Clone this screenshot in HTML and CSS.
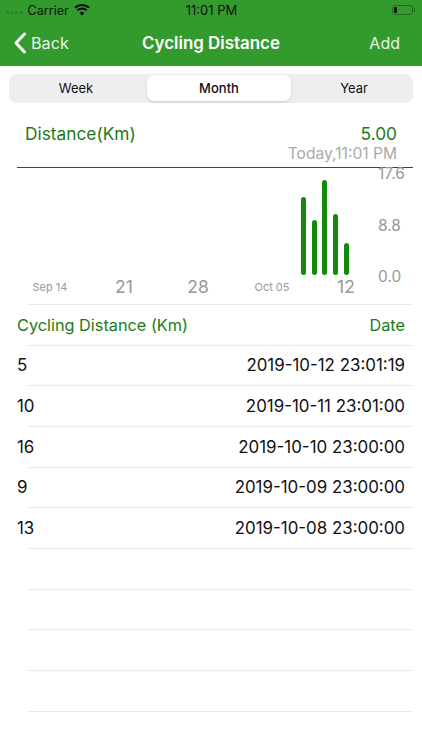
FILE: index.html
```html
<!DOCTYPE html>
<html lang="en">
<head>
<meta charset="utf-8">
<title>Cycling Distance</title>
<link rel="stylesheet" href="styles.css">
</head>
<body>
<div class="app">
  <header class="header">
    <div class="status">
      <div class="status-left">
        <span class="dots"><i></i><i></i><i></i><i></i></span>
        <span>Carrier</span>
        <svg class="wifi" viewBox="0 0 16 12" width="16" height="12"><path d="M8 11.600 5.600 8.900a3.500 3.500 0 0 1 4.800 0z" fill="#111"/><path d="M3.900 7.100a6 6 0 0 1 8.200 0l1.300-1.400a8 8 0 0 0-10.800 0z" fill="#111"/><path d="M1.600 4.600a9.300 9.300 0 0 1 12.800 0L15.800 3.200a11.300 11.300 0 0 0-15.600 0z" fill="#111"/></svg>
      </div>
      <div class="status-time">11:01 PM</div>
      <div class="status-right">
        <span class="battery"><span class="battery-level"></span></span><span class="battery-cap"></span>
      </div>
    </div>
    <nav class="nav">
      <a class="back"><svg viewBox="0 0 14 22" width="14" height="22"><path d="M11.500 2 3 11l8.500 9" fill="none" stroke="#fff" stroke-width="3" stroke-linecap="round" stroke-linejoin="round"/></svg><span>Back</span></a>
      <h1 class="title">Cycling Distance</h1>
      <a class="add">Add</a>
    </nav>
  </header>

  <div class="segments">
    <div class="segment">Week</div>
    <div class="segment active">Month</div>
    <div class="segment">Year</div>
  </div>

  <section class="summary">
    <div class="summary-row">
      <span class="summary-label">Distance(Km)</span>
      <span class="summary-value">5.00</span>
    </div>
    <div class="summary-time">Today,11:01 PM</div>
  </section>

  <section class="chart">
    <div class="plot">
      <div class="bars">
        <span class="bar" style="height:78px"></span>
        <span class="bar" style="height:55px"></span>
        <span class="bar" style="height:95px"></span>
        <span class="bar" style="height:61px"></span>
        <span class="bar" style="height:32px"></span>
      </div>
      <div class="y-axis"><span>17.6</span><span>8.8</span><span>0.0</span></div>
    </div>
    <div class="x-axis">
      <span class="small">Sep 14</span><span>21</span><span>28</span><span class="small">Oct 05</span><span>12</span>
    </div>
  </section>

  <div class="table-head">
    <span>Cycling Distance (Km)</span>
    <span>Date</span>
  </div>

  <ul class="rows">
    <li class="row"><span>5</span><span>2019-10-12 23:01:19</span></li>
    <li class="row"><span>10</span><span>2019-10-11 23:01:00</span></li>
    <li class="row"><span>16</span><span>2019-10-10 23:00:00</span></li>
    <li class="row"><span>9</span><span>2019-10-09 23:00:00</span></li>
    <li class="row"><span>13</span><span>2019-10-08 23:00:00</span></li>
    <li class="row"></li>
    <li class="row"></li>
    <li class="row"></li>
    <li class="row"></li>
    <li class="row"></li>
  </ul>
</div>
</body>
</html>
```

FILE: styles.css
```css
* { box-sizing: border-box; }
html, body { margin: 0; padding: 0; background: #fff; }
body { font-family: Inter, "Liberation Sans", Arial, sans-serif; }
.app { width: 422px; height: 750px; overflow: hidden; background: #fff; }

.header { height: 66px; background: #339a2e; color: #fff; }
.status { height: 20px; padding: 0 5px 0 6px; display: grid; grid-template-columns: 1fr auto 1fr; align-items: center; font-size: 12.600px; color: #111; }
.status-left { display: flex; align-items: center; gap: 5px; }
.dots { display: flex; gap: 1.500px; }
.dots i { width: 3px; height: 3px; margin-top: 4px; border-radius: 50%; background: #2b7f27; }
.status-time { text-align: center; font-size: 13px; }
.status-right { display: flex; justify-content: flex-end; align-items: center; padding-right: 2px; }
.battery { width: 21px; height: 10px; border: 1px solid #1f6e1c; border-radius: 3px; padding: 1px; display: block; }
.battery-level { display: block; width: 3px; height: 6px; background: #111; border-radius: 1px; }
.battery-cap { width: 1px; height: 4px; margin-left: 1px; background: #1f6e1c; }

.nav { height: 46px; display: grid; grid-template-columns: 1fr auto 1fr; align-items: center; padding: 0 13px; }
.back { display: flex; align-items: center; gap: 4px; font-size: 16.200px; color: #e8f3e6; }
.title { margin: 0; font-size: 16.900px; font-weight: 600; }
.add { justify-self: end; margin-right: 9px; font-size: 16px; color: #e8f3e6; }

.segments { margin: 8px 9px 0; height: 29px; padding: 1px 2px 2px; background: #eeeef0; border-radius: 8px; display: grid; grid-template-columns: 130px 144px 114px; column-gap: 6px; font-size: 13px; color: #111; }
.segment { display: flex; align-items: center; justify-content: center; border-radius: 7px; }
.segment.active { background: #fff; font-weight: 500; box-shadow: 0 1px 3px rgba(0,0,0,.15); }

.summary { margin: 0 25px 0 17px; height: 64px; padding-top: 19px; }
.summary-row { display: flex; justify-content: space-between; align-items: center; padding-left: 8px; font-size: 17.300px; color: #1d7a16; height: 22px; }
.summary-time { text-align: right; font-size: 15.600px; color: #aaa; height: 17px; line-height: 17px; margin-top: 1px; }

.chart { margin-left: 13px; }
.plot { height: 119px; margin-left: 4px; width: 396px; border-top: 1.500px solid #444; display: flex; justify-content: flex-end; }
.bars { display: flex; align-items: flex-end; gap: 5.600px; padding-bottom: 11px; margin-right: 29.500px; }
.bar { width: 5px; background: #148a0c; border-radius: 3px; }
.y-axis { width: 35px; display: flex; flex-direction: column; justify-content: space-between; font-size: 15.500px; line-height: 18px; color: #999; margin-top: -3px; }
.x-axis { width: 370px; height: 27.500px; margin-top: -10px; padding-bottom: 7.500px; display: grid; grid-template-columns: repeat(5, 74px); align-items: center; justify-items: center; font-size: 17.500px; color: #999; }
.x-axis .small { font-size: 11px; }

.table-head { margin: 0 9px 0 28px; height: 41px; border-top: 1px solid #eaeaea; display: flex; justify-content: space-between; align-items: center; color: #1d7a16; font-size: 16.300px; }
.table-head span:first-child { margin-left: -11px; }
.table-head span:last-child { margin-right: 8px; }

.rows { list-style: none; margin: 0; padding: 0; }
.row { height: 40.700px; margin-left: 28px; margin-right: 9px; border-top: 1px solid #eaeaea; display: flex; justify-content: space-between; align-items: center; font-size: 16.900px; color: #111; }
.row span:first-child { margin-left: -11px; }
.row span:last-child { margin-right: 8px; }
```
